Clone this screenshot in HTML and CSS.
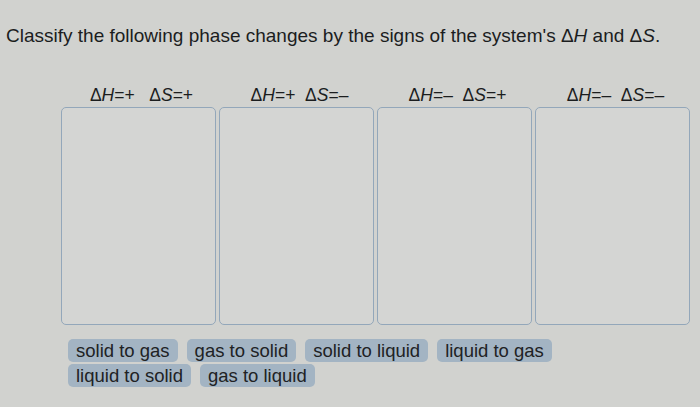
FILE: index.html
```html
<!DOCTYPE html>
<html lang="en">
<head>
    <meta charset="UTF-8">
    <meta name="viewport" content="width=device-width, initial-scale=1.0">
    <title>Phase Change Classification</title>
    <link rel="stylesheet" href="styles.css">
</head>
<body>
    <div class="question">
        <p class="prompt">Classify the following phase changes by the signs of the system's Δ<i>H</i> and Δ<i>S</i>.</p>

        <div class="bins">
            <div class="bin">
                <div class="bin-label">Δ<i>H</i>=+&nbsp;&nbsp; Δ<i>S</i>=+</div>
                <div class="drop-zone"></div>
            </div>
            <div class="bin">
                <div class="bin-label">Δ<i>H</i>=+&nbsp; Δ<i>S</i>=–</div>
                <div class="drop-zone"></div>
            </div>
            <div class="bin">
                <div class="bin-label">Δ<i>H</i>=–&nbsp; Δ<i>S</i>=+</div>
                <div class="drop-zone"></div>
            </div>
            <div class="bin">
                <div class="bin-label">Δ<i>H</i>=–&nbsp; Δ<i>S</i>=–</div>
                <div class="drop-zone"></div>
            </div>
        </div>

        <div class="answer-pool">
            <span class="chip">solid to gas</span>
            <span class="chip">gas to solid</span>
            <span class="chip">solid to liquid</span>
            <span class="chip">liquid to gas</span>
            <span class="chip">liquid to solid</span>
            <span class="chip">gas to liquid</span>
        </div>
    </div>
</body>
</html>
```

FILE: styles.css
```css
body {
    margin: 0;
    background-color: #d1d2cf;
    font-family: "Liberation Sans", Arial, sans-serif;
    color: #1b1d1e;
}
.question {
    padding: 24px 0 0 6px;
    height: 383px;
}
.prompt {
    margin: 0;
    font-size: 19px;
    line-height: 24px;
}
.prompt i, .bin-label i {
    font-style: italic;
}
.bins {
    display: grid;
    grid-template-columns: repeat(4, 155px);
    column-gap: 3px;
    margin: 37px 0 0 55px;
}
.bin-label {
    text-align: center;
    font-size: 17.5px;
    line-height: 20px;
    margin-bottom: 2px;
    padding-left: 6px;
}
.drop-zone {
    height: 216px;
    background-color: #d4d5d3;
    border: 1px solid #93a7ba;
    border-radius: 5px;
}
.answer-pool {
    display: flex;
    flex-wrap: wrap;
    gap: 2px 9px;
    width: 500px;
    margin: 14px 0 0 62px;
}
.chip {
    background-color: #a3b4c3;
    border-radius: 5px;
    padding: 0 8px;
    font-size: 18.5px;
    line-height: 23px;
    color: #202224;
}
```
